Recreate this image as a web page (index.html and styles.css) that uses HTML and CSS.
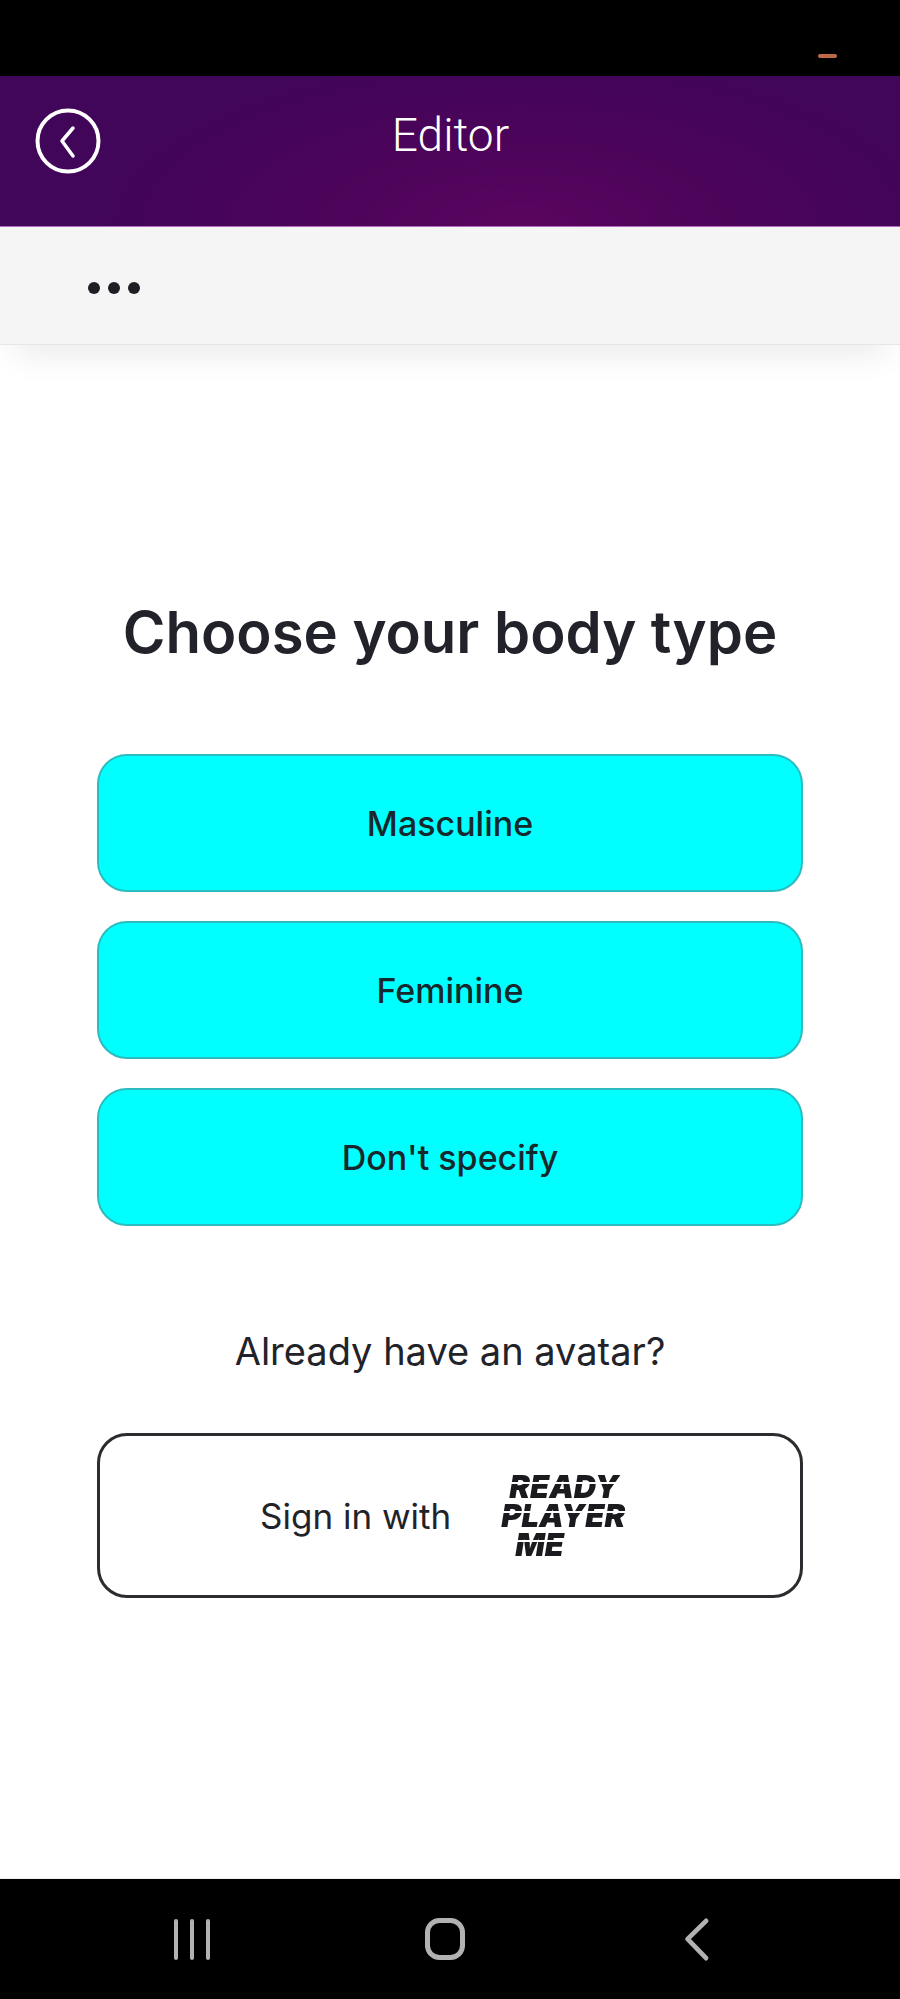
FILE: index.html
```html
<!DOCTYPE html>
<html lang="en">
<head>
    <meta charset="UTF-8">
    <meta name="viewport" content="width=device-width, initial-scale=1.0">
    <title>Editor</title>
    <link rel="stylesheet" href="styles.css">
</head>
<body>
    <div class="status-bar">
        <span class="status-dash"></span>
    </div>

    <header class="app-header">
        <a href="#" class="back-button" aria-label="Back">
            <svg width="66" height="66" viewBox="0 0 66 66" fill="none" stroke="#fff">
                <circle cx="33" cy="33" r="30.5" stroke-width="4"/>
                <path d="M38 20 L27 33 L38 48" stroke-width="3.5" stroke-linecap="round" stroke-linejoin="round"/>
            </svg>
        </a>
        <h1 class="app-title">Editor</h1>
    </header>

    <div class="toolbar">
        <div class="more-dots">
            <span></span><span></span><span></span>
        </div>
    </div>

    <main class="content">
        <h2 class="page-title">Choose your body type</h2>

        <div class="options">
            <button class="option-button">Masculine</button>
            <button class="option-button">Feminine</button>
            <button class="option-button">Don't specify</button>
        </div>

        <p class="already">Already have an avatar?</p>

        <button class="signin-button">
            <span class="signin-label">Sign in with</span>
            <span class="rpm-logo">
                <span class="rpm-ready">READY</span>
                <span class="rpm-player">PLAYER</span>
                <span class="rpm-me">ME</span>
            </span>
        </button>
    </main>

    <nav class="nav-bar">
        <svg class="nav-icon" width="40" height="44" viewBox="0 0 40 44" fill="none" stroke="#b2b2b2" stroke-width="4" stroke-linecap="round">
            <path d="M4 4 V41 M20 4 V41 M36 4 V41"/>
        </svg>
        <svg class="nav-icon" width="44" height="46" viewBox="0 0 44 46" fill="none" stroke="#b2b2b2" stroke-width="5">
            <rect x="4.5" y="4.5" width="35" height="37" rx="12"/>
        </svg>
        <svg class="nav-icon" width="30" height="44" viewBox="0 0 30 44" fill="none" stroke="#b2b2b2" stroke-width="5" stroke-linecap="round" stroke-linejoin="round">
            <path d="M25 4 L5 22 L25 41" transform="translate(1 0) scale(0.92 1)"/>
        </svg>
    </nav>
</body>
</html>
```

FILE: styles.css
```css
:root {
    --cyan: #00ffff;
    --cyan-border: #2cbcc0;
    --text-color: #22232a;
    --nav-black: #000;
}

html, body {
    margin: 0;
    padding: 0;
}

body {
    width: 900px;
    height: 1999px;
    display: flex;
    flex-direction: column;
    overflow: hidden;
    background: #fff;
    color: var(--text-color);
    font-family: "Inter", "Noto Sans", sans-serif;
}

.status-bar {
    height: 76px;
    flex: none;
    box-sizing: border-box;
    background: var(--nav-black);
    display: flex;
    justify-content: flex-end;
    padding: 54px 63px 0 0;
}

.status-dash {
    width: 19px;
    height: 4px;
    border-radius: 2px;
    background: #c0694a;
}

.app-header {
    height: 151px;
    flex: none;
    box-sizing: border-box;
    display: grid;
    grid-template-columns: 1fr auto 1fr;
    padding: 32px 0 0 35px;
    background: radial-gradient(ellipse 420px 170px at 58% 100%, #5a055f 0%, #4a0459 55%, #41055a 100%);
    border-bottom: 1px solid #b36cc0;
}

.back-button {
    display: block;
    width: 66px;
    height: 66px;
}

.app-title {
    grid-column: 2;
    margin: 0;
    color: #fff;
    font-family: "Roboto", sans-serif;
    font-size: 46px;
    font-weight: 300;
    line-height: 54px;
    transform: translateX(-17px);
}

.toolbar {
    height: 118px;
    flex: none;
    box-sizing: border-box;
    padding: 55px 0 0 88px;
    background: #f5f5f6;
    border-bottom: 1px solid #e6e6e6;
    box-shadow: 0 22px 34px -14px rgba(0, 0, 0, 0.09);
}

.more-dots {
    display: flex;
    gap: 8px;
}

.more-dots span {
    width: 12px;
    height: 12px;
    border-radius: 50%;
    background: #1e1f24;
}

.content {
    flex: 1;
    box-sizing: border-box;
    padding: 252px 97px 0;
    text-align: center;
}

.page-title {
    margin: 0;
    font-size: 58px;
    font-weight: 600;
    line-height: 70px;
    white-space: nowrap;
}

.options {
    display: flex;
    flex-direction: column;
    gap: 29px;
    margin-top: 87px;
}

.option-button {
    height: 138px;
    border: 2px solid var(--cyan-border);
    border-radius: 30px;
    background: var(--cyan);
    color: #15282c;
    font-family: inherit;
    font-size: 34px;
    font-weight: 500;
}

.already {
    margin: 102px 0 0;
    font-size: 38px;
    font-weight: 400;
    line-height: 46px;
}

.signin-button {
    display: flex;
    align-items: center;
    width: 100%;
    height: 165px;
    margin-top: 59px;
    padding: 0 0 0 160px;
    box-sizing: border-box;
    background: #fff;
    border: 3px solid #2c2c30;
    border-radius: 30px;
    color: var(--text-color);
    font-family: inherit;
}

.signin-label {
    font-size: 35px;
    font-weight: 400;
    white-space: nowrap;
}

.rpm-logo {
    display: flex;
    flex-direction: column;
    margin-left: 50px;
    font-family: "Inter", sans-serif;
    font-size: 31px;
    font-style: italic;
    font-weight: 900;
    line-height: 29px;
    text-align: left;
    background: repeating-linear-gradient(180deg, #1b1b1f 0 10px, #fff 10px 12px, #1b1b1f 12px 29px);
    -webkit-background-clip: text;
    background-clip: text;
    color: transparent;
}

.rpm-ready { margin-left: 8px; }
.rpm-me { margin-left: 14px; }

.nav-bar {
    height: 121px;
    flex: none;
    display: grid;
    grid-template-columns: 384px 88px 1fr;
    align-items: center;
    background: var(--nav-black);
    border-top: 1px solid #eee;
    box-sizing: border-box;
}

.nav-icon:nth-child(1) { margin-left: 172px; }
.nav-icon:nth-child(2) { margin-left: 39px; }
.nav-icon:nth-child(3) { margin-left: 210px; }
```
